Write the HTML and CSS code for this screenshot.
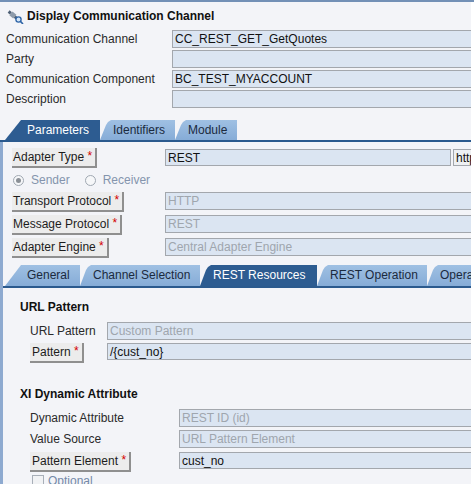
FILE: index.html
```html
<!DOCTYPE html>
<html>
<head>
<meta charset="utf-8">
<link rel="stylesheet" href="styles.css">
</head>
<body>
<div class="topline"></div>
<div class="page">
  <div class="title">
    <svg class="title-icon" width="17" height="14" viewBox="0 0 17 14">
      <g transform="rotate(40 7 6)">
        <rect x="0" y="4.5" width="3" height="3" fill="#4e5f75"/>
        <rect x="3" y="3.5" width="5" height="5" fill="#8e9bab"/>
        <rect x="8" y="4.5" width="3" height="3" fill="#4e5f75"/>
      </g>
      <circle cx="11.5" cy="9.5" r="2.6" fill="#d4e6f8" stroke="#2d63a6" stroke-width="1.3"/>
      <line x1="13.4" y1="11.4" x2="16" y2="14" stroke="#2d63a6" stroke-width="1.6"/>
    </svg>
    <span>Display Communication Channel</span>
  </div>

  <div class="hdr">
    <div class="hrow"><span class="hlbl">Communication Channel</span><span class="field">CC_REST_GET_GetQuotes</span></div>
    <div class="hrow"><span class="hlbl">Party</span><span class="field"></span></div>
    <div class="hrow"><span class="hlbl">Communication Component</span><span class="field">BC_TEST_MYACCOUNT</span></div>
    <div class="hrow"><span class="hlbl">Description</span><span class="field"></span></div>
  </div>

  <div class="tabs tabs-1">
    <div class="tab first active w-params">Parameters</div>
    <div class="tab w-ident">Identifiers</div>
    <div class="tab w-module">Module</div>
  </div>

  <div class="panel">
    <div class="params">
      <div class="prow">
        <div class="pcell"><span class="btn">Adapter Type <span class="req">*</span></span></div>
        <span class="field adapter">REST</span>
        <span class="field http">http</span>
      </div>
      <div class="radios">
        <span class="radio checked"></span><span class="rtext">Sender</span>
        <span class="radio r2"></span><span class="rtext">Receiver</span>
      </div>
      <div class="prow">
        <div class="pcell"><span class="btn">Transport Protocol <span class="req">*</span></span></div>
        <span class="field dis">HTTP</span>
      </div>
      <div class="prow">
        <div class="pcell"><span class="btn">Message Protocol <span class="req">*</span></span></div>
        <span class="field dis">REST</span>
      </div>
      <div class="prow">
        <div class="pcell"><span class="btn">Adapter Engine <span class="req">*</span></span></div>
        <span class="field dis">Central Adapter Engine</span>
      </div>
    </div>

    <div class="tabs tabs-2">
      <div class="tab first w-general">General</div>
      <div class="tab w-chsel">Channel Selection</div>
      <div class="tab active w-resres">REST Resources</div>
      <div class="tab w-resop">REST Operation</div>
      <div class="tab w-opera">Operation Determination</div>
    </div>

    <div class="sub">
      <div class="sec-h">URL Pattern</div>
      <div class="srow">
        <span class="slbl url">URL Pattern</span>
        <span class="field dis">Custom Pattern</span>
      </div>
      <div class="srow tall">
        <div class="slbl url"><span class="btn">Pattern <span class="req">*</span></span></div>
        <span class="field">/{cust_no}</span>
      </div>

      <div class="sec-h xi">XI Dynamic Attribute</div>
      <div class="srow">
        <span class="slbl xi">Dynamic Attribute</span>
        <span class="field dis">REST ID (id)</span>
      </div>
      <div class="srow">
        <span class="slbl xi">Value Source</span>
        <span class="field dis">URL Pattern Element</span>
      </div>
      <div class="srow tall pe">
        <div class="slbl xi"><span class="btn">Pattern Element <span class="req">*</span></span></div>
        <span class="field">cust_no</span>
      </div>
      <div class="opt">
        <span class="check"></span><span class="otext">Optional</span>
      </div>
    </div>
  </div>
</div>
</body>
</html>
```

FILE: styles.css
```css
* { box-sizing: border-box; }
html, body { margin: 0; padding: 0; }
body {
  background: #ffffff;
  font: 12px "Liberation Sans", Arial, sans-serif;
  color: #222;
  width: 474px;
  height: 484px;
  overflow: hidden;
}
.topline { height: 2px; background: #7290b6; }
.page {
  width: 471px;
  height: 482px;
  background: #f3f4f8;
  overflow: hidden;
}

/* title */
.title {
  height: 28px;
  display: flex;
  align-items: center;
  padding-left: 7px;
  gap: 3px;
  font-weight: bold;
  color: #111;
}
.title-icon { flex: none; margin-top: 1px; }

/* header form */
.hdr { display: flex; flex-direction: column; gap: 2px; }
.hrow { display: flex; height: 18px; }
.hlbl { width: 172px; flex: none; padding-left: 6px; line-height: 18px; color: #2a2a2a; }

.field {
  flex: 1;
  height: 18px;
  background: #dbe5f2;
  border: 1px solid #a3a7ad;
  border-right: 0;
  padding-left: 2px;
  line-height: 16px;
  color: #111;
  white-space: nowrap;
  overflow: hidden;
}
.field.dis { color: #9fa6ae; }

/* tabs */
.tabs {
  display: flex;
  border-bottom: 2px solid #2b5a8e;
  overflow: hidden;
  white-space: nowrap;
}
.tabs-1 { margin-top: 12px; padding-left: 5px; height: 22px; }
.tabs-2 { margin-top: 7px; padding-left: 2px; height: 23px; }
.tab {
  flex: none;
  height: 20px;
  line-height: 20px;
  padding-left: 13px;
  color: #1b2a3e;
  background: linear-gradient(#9fc0e3, #86acd7);
  clip-path: polygon(0 100%, 6px 5px, 8px 2px, 11px 0, 100% 0, 100% 100%);
  overflow: hidden;
}
.tabs-2 .tab { height: 21px; line-height: 21px; }
.tab.first {
  padding-left: 22px;
  clip-path: polygon(0 100%, 16px 0, 100% 0, 100% 100%);
}
.tab.active {
  background: #2d5c91;
  color: #ffffff;
}
.w-params { width: 95px; }
.w-ident { width: 75px; }
.w-module { width: 62px; }
.w-general { width: 75px; }
.w-chsel { width: 120px; }
.w-resres { width: 117px; }
.w-resop { width: 110px; }
.w-opera { width: 60px; }

/* panel */
.panel { border-left: 3px solid #8eaad0; }
.params { padding: 6px 0 0 9px; display: flex; flex-direction: column; gap: 3px; }
.prow { display: flex; height: 20px; align-items: flex-start; }
.pcell { width: 153px; flex: none; }
.btn {
  display: inline-block;
  height: 20px;
  line-height: 18px;
  padding: 0 3px 0 1px;
  background: #ececec;
  border-right: 2px solid #8f8f8f;
  border-bottom: 2px solid #8f8f8f;
  color: #1c1c1c;
  white-space: nowrap;
}
.req { color: #d40000; position: relative; top: -1px; }
.field.adapter { flex: none; width: 286px; margin-top: 1px; height: 17px; border-right: 1px solid #a3a7ad; }
.field.http { margin-left: 2px; background: #eef0f3; margin-top: 1px; height: 17px; }

.radios { display: flex; align-items: center; height: 18px; }
.radio {
  width: 11px; height: 11px;
  border-radius: 50%;
  border: 1px solid #a0a8b2;
  background: #f6f7f9;
  display: flex; align-items: center; justify-content: center;
  margin-left: 1px;
}
.radio.checked::after {
  content: "";
  width: 5px; height: 5px; border-radius: 50%;
  background: #8b9097;
}
.radio.r2 { margin-left: 15px; }
.rtext { color: #8494ad; margin-left: 7px; }

/* sub panel */
.sub { padding-left: 17px; }
.sec-h { font-weight: bold; line-height: 16px; margin-top: 11px; color: #111; }
.sec-h.xi { margin-top: 23px; }
.srow { display: flex; height: 18px; margin-top: 3px; padding-left: 10px; }
.sec-h + .srow { margin-top: 7px; }
.srow.tall { height: 20px; }
.srow.tall .field { height: 17px; }
.srow.pe { margin-top: 4px; }
.slbl { flex: none; line-height: 18px; color: #2a2a2a; }
.slbl.url { width: 77px; }
.slbl.xi { width: 149px; }
.slbl .btn { padding-left: 2px; }

.opt { display: flex; align-items: flex-start; padding-left: 12px; margin-top: 2px; height: 14px; }
.check {
  width: 12px; height: 12px;
  border: 1px solid #a8afb8;
  background: #f1f2f4;
  margin-top: 1px;
}
.otext { color: #7489a8; margin-left: 4px; line-height: 14px; }
```
